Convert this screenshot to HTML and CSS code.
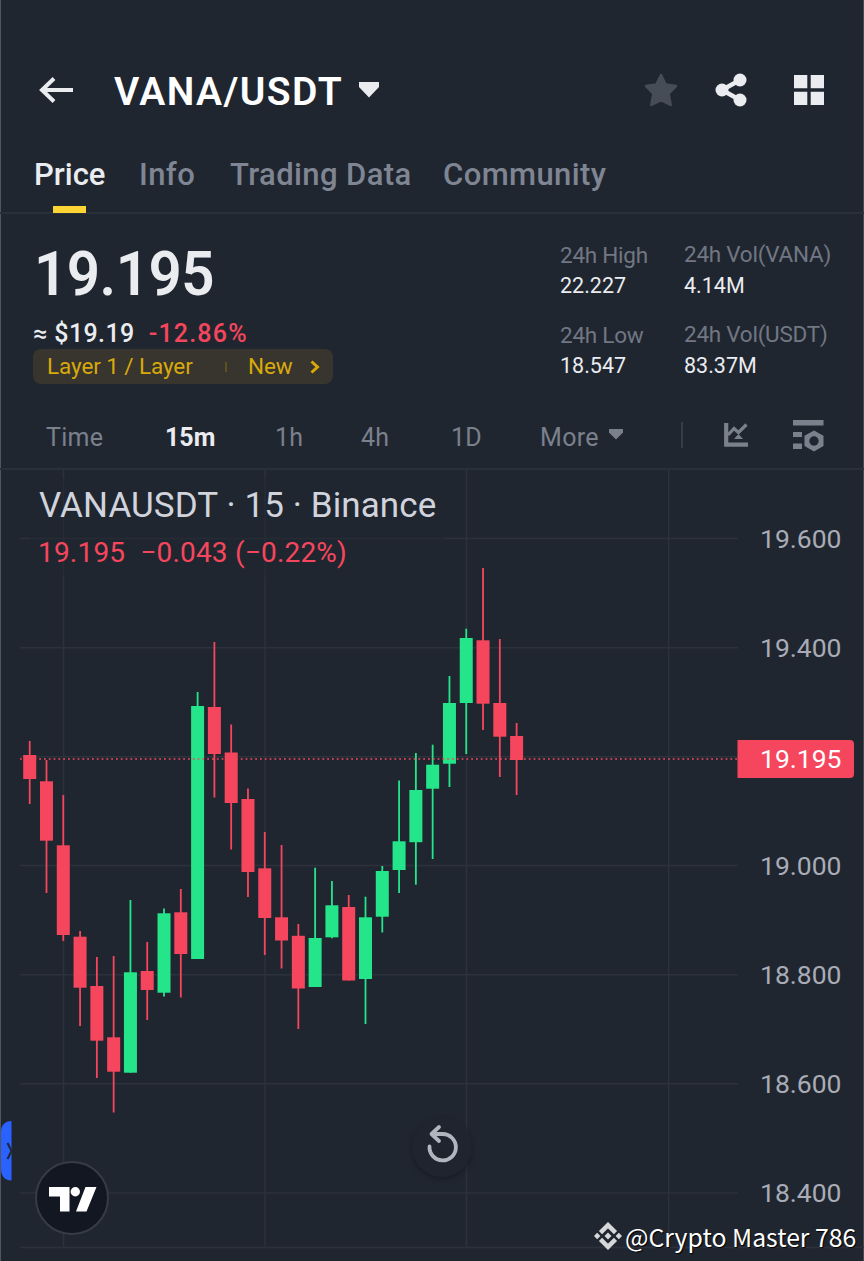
FILE: index.html
```html
<!DOCTYPE html>
<html lang="en">
<head>
  <meta charset="UTF-8" />
  <meta name="viewport" content="width=device-width, initial-scale=1.0" />
  <title>VANA/USDT</title>
  <link rel="stylesheet" href="styles.css">
</head>
<body>
  <header class="topbar">
    <svg class="back" width="36" height="30" viewBox="0 0 36 30"><path d="M35 15H5M16 3.500L4 15L16 26.500" fill="none" stroke="#eaecef" stroke-width="4"/></svg>
    <h1>VANA/USDT</h1>
    <svg class="caret" width="22" height="18" viewBox="0 0 22 18"><path d="M1 1H21V6L11 16.500L1 6Z" fill="#eaecef"/></svg>
    <div class="actions">
      <svg width="34" height="34" viewBox="0 0 34 34"><path d="M17 2L21.700 11.500L32 13L24.600 20.500L26.700 32L17 27.200L7.300 32L9.400 20.500L2 13L12.300 11.500Z" fill="#474d57" stroke="#474d57" stroke-width="2.500" stroke-linejoin="round"/></svg>
      <svg width="34" height="34" viewBox="0 0 34 34"><path d="M26 7L8 17L26 27" fill="none" stroke="#eaecef" stroke-width="4.500"/><circle cx="26" cy="7" r="6.500" fill="#eaecef"/><circle cx="8" cy="17" r="6.500" fill="#eaecef"/><circle cx="26" cy="27" r="6.500" fill="#eaecef"/></svg>
      <svg width="30" height="30" viewBox="0 0 30 30"><path d="M0 0H13.300V13.300H0ZM16.700 0H30V13.300H16.700ZM0 16.700H13.300V30H0ZM16.700 16.700H30V30H16.700Z" fill="#eaecef"/></svg>
    </div>
  </header>

  <nav class="tabs">
    <a class="active">Price</a>
    <a>Info</a>
    <a>Trading Data</a>
    <a>Community</a>
  </nav>

  <section class="summary">
    <div class="quote">
      <div class="price">19.195</div>
      <div class="change"><span>≈ $19.19</span><span class="down">-12.86%</span></div>
      <div class="tags">
        <span class="layer">Layer 1 / Layer</span>
        <i></i>
        <span class="new">New</span>
        <svg width="10" height="14" viewBox="0 0 10 14"><path d="M1.500 1.500L7.500 7L1.500 12.500" fill="none" stroke="#d9a90b" stroke-width="3"/></svg>
      </div>
    </div>
    <dl class="stats high-low">
      <dt>24h High</dt><dd>22.227</dd>
      <dt>24h Low</dt><dd>18.547</dd>
    </dl>
    <dl class="stats volume">
      <dt>24h Vol(VANA)</dt><dd>4.14M</dd>
      <dt>24h Vol(USDT)</dt><dd>83.37M</dd>
    </dl>
  </section>

  <nav class="intervals">
    <a>Time</a>
    <a class="active">15m</a>
    <a>1h</a>
    <a>4h</a>
    <a>1D</a>
    <a class="more">More</a>
    <svg class="more-caret" width="14" height="11" viewBox="0 0 14 11"><path d="M0 0H14V3.500L7 10.500L0 3.500Z" fill="#7b808d"/></svg>
    <i></i>
    <svg class="indicator" width="25" height="26" viewBox="0 0 25 26"><path d="M2.200 1V22.700H24" fill="none" stroke="#7b808d" stroke-width="4.200"/><path d="M4 13L10 6.500L14.500 10.500L22.500 2.500" fill="none" stroke="#7b808d" stroke-width="3.200"/><path d="M14.500 12L19 17H10Z" fill="#7b808d"/></svg>
    <svg class="settings" width="31" height="32" viewBox="0 0 31 32"><path d="M0 0H30.500V5.500H0ZM0 12H9V17H0ZM0 23.500H9V29H0Z" fill="#7b808d"/><path d="M21 10.500L30.500 15.700V26L21 31.500L11.500 26V15.700Z" fill="#7b808d"/><circle cx="21" cy="21" r="4.700" fill="#202630"/></svg>
  </nav>

  <main class="chart">
    <svg class="plot" width="864" height="791" viewBox="0 470 864 791">
      <path class="grid" d="M63.500 470V1247M265 470V1247M466.500 470V1247M668.700 470V1247M20 538.500H738M20 647.800H738M20 756.700H738M20 865.500H738M20 974.800H738M20 1083.700H738M20 1193H738M20 1247.500H864"/>
      <g id="candles"></g>
      <path class="last" d="M20 759H738"/>
      <path d="M737.500 740H850Q854 740 854 744V774Q854 778 850 778H737.500Z" fill="#f6465d"/>
      <g class="axis">
        <text x="760" y="548">19.600</text>
        <text x="760" y="657">19.400</text>
        <text x="760" y="768" class="current">19.195</text>
        <text x="760" y="875">19.000</text>
        <text x="760" y="984">18.800</text>
        <text x="760" y="1093">18.600</text>
        <text x="760" y="1202">18.400</text>
      </g>
    </svg>

    <div class="legend">
      <div class="symbol">VANAUSDT · 15 · Binance</div>
      <div class="values"><span>19.195</span><span>−0.043 (−0.22%)</span></div>
    </div>

    <svg class="drawer" width="12" height="60" viewBox="0 0 12 60"><path d="M11.500 0V59.500C5 59.500 1 55 1 48V11C1 4 5 0 11.500 0Z" fill="#2962ff"/><path d="M7.500 22L11.500 30L7.500 38" fill="none" stroke="#202630" stroke-width="2"/></svg>

    <div class="tv">
      <svg width="48" height="25" viewBox="0 0 48 25"><path d="M0 0H20.500V24.500H11V9.500H0ZM36.500 0H47.500L37.500 24.500H27Z" fill="#fff"/><circle cx="26.300" cy="4.700" r="4.700" fill="#fff"/></svg>
    </div>

    <div class="reset">
      <svg width="34" height="40" viewBox="0 0 34 40"><path d="M3.500 22.500A13.200 13.200 0 1 0 16.700 10H6M13 3L5.500 10L13 17" fill="none" stroke="#b2b5be" stroke-width="3.800" stroke-linecap="round" stroke-linejoin="round"/></svg>
    </div>

    <div class="watermark">
      <svg width="28" height="28" viewBox="0 0 28 28"><path d="M6.500 10.700L14 3.200L21.500 10.700M6.500 17.300L14 24.800L21.500 17.300" fill="none" stroke="#d6d7d9" stroke-width="4.500"/><path d="M14 10.500L17.500 14L14 17.500L10.500 14ZM3.200 10.800L6.400 14L3.200 17.200L0 14ZM24.800 10.800L28 14L24.800 17.200L21.600 14Z" fill="#d6d7d9"/></svg>
      <span>@Crypto Master 786</span>
    </div>
  </main>

  <script>
    // wick top, body top, body bottom, wick bottom, colour
    const candles = [
      [741, 755, 779, 804, 'r'],
      [760, 781.300, 840.700, 893, 'r'],
      [795, 845.300, 935, 941, 'r'],
      [931, 936.700, 987.700, 1026, 'r'],
      [957, 986, 1040.700, 1078, 'r'],
      [956, 1037.300, 1071.700, 1112.500, 'r'],
      [900, 972.300, 1072.700, 1072.700, 'g'],
      [942, 971, 990, 1020, 'r'],
      [908.500, 913.300, 992.700, 996.500, 'g'],
      [889, 912.300, 954, 997.500, 'r'],
      [692, 706, 959, 959, 'g'],
      [642, 707, 754, 797.500, 'r'],
      [724.500, 752.500, 803, 849.500, 'r'],
      [788.500, 799, 872, 897, 'r'],
      [832, 868.300, 918, 955, 'r'],
      [845, 917.300, 940.500, 968.500, 'r'],
      [924, 935.800, 988.500, 1029, 'r'],
      [867.700, 938, 987, 987, 'g'],
      [881, 905.300, 937.300, 938.300, 'g'],
      [895, 907, 980.500, 980.500, 'r'],
      [896.700, 917.300, 979, 1024, 'g'],
      [866, 871, 916.700, 932.500, 'g'],
      [780.500, 841.300, 870, 893, 'g'],
      [753, 790, 842.200, 884.700, 'g'],
      [744.700, 764.700, 788.700, 859, 'g'],
      [676, 703, 763.700, 787, 'g'],
      [628.700, 638, 703, 754, 'g'],
      [568, 640.300, 703.700, 730, 'r'],
      [639, 703, 736.700, 777, 'r'],
      [723, 736, 760, 795, 'r']
    ];

    let out = '';
    candles.forEach(([high, top, bottom, low, dir], i) => {
      const x = 29.700 + i * 16.790;
      out += `<g class="${dir}"><rect x="${x - 0.9}" y="${high}" width="1.8" height="${low - high}"/>` +
        `<rect x="${x - 6.5}" y="${top}" width="13" height="${bottom - top}"/></g>`;
    });
    document.getElementById('candles').innerHTML = out;
  </script>
</body>
</html>
```
FILE: styles.css
```css
* { box-sizing: border-box; }
body { margin: 0; width: 864px; height: 1261px; overflow: hidden; background: #202630; color: #eaecef; font-family: Roboto, "Open Sans", sans-serif; box-shadow: inset 1px 0 #50555f, inset -1px 0 #454a54; }
svg { display: block; flex: none; }

.topbar { display: flex; align-items: center; height: 130px; padding: 49px 40px 0 38px; }
.topbar h1 { width: 229px; margin: 5px 0 0 40px; font-size: 39px; font-weight: 600; line-height: 46px; letter-spacing: 1.4px; color: #fff; white-space: nowrap; }
.caret { margin-left: 15px; }
.actions { display: flex; align-items: center; margin-left: auto; }
.actions svg { margin-left: 36.500px; }
.actions svg:last-child { margin-left: 46px; }

.tabs { display: grid; grid-template-columns: 105px 91px 213px auto; height: 84px; padding: 26px 0 0 34px; border-bottom: 2px solid #2a303a; font-size: 31px; font-weight: 500; line-height: 37px; letter-spacing: 0.4px; white-space: nowrap; }
.tabs a { color: #7f8592; }
.tabs .active { display: flex; flex-direction: column; justify-content: space-between; height: 57px; letter-spacing: 0; color: #eaecef; }
.tabs .active::after { content: ""; width: 33px; height: 7px; margin-left: 19px; background: #fcd535; }

.summary { display: grid; grid-template-columns: 526px 124px auto; height: 190px; padding: 26px 0 0 34px; }
.price { margin-top: 4px; font-size: 61px; font-weight: 600; line-height: 60px; letter-spacing: -0.5px; transform: scaleX(0.955); transform-origin: 0 0; }
.change { display: flex; gap: 14px; margin: 14px 0 0 -1px; font-size: 25px; font-weight: 500; line-height: 31px; letter-spacing: 0.4px; white-space: nowrap; }
.change .down { letter-spacing: 1.2px; color: #f6465d; }
.tags { display: flex; align-items: center; width: 300px; height: 35px; margin: 0 0 0 -1px; padding-left: 14px; border-radius: 8px; background: #37352d; font-size: 22.500px; line-height: 35px; letter-spacing: -0.1px; color: #d9a90b; white-space: nowrap; }
.tags .layer { width: 178px; }
.tags i { width: 2px; height: 10px; background: #5f5021; }
.tags .new { width: 62px; margin-left: 21px; }
.stats { margin: 0; font-size: 22.500px; line-height: 30px; letter-spacing: -0.25px; white-space: nowrap; }
.stats dt { color: #717783; }
.stats dd { margin: 1px 0 19px; font-size: 21.500px; letter-spacing: 0; }
.volume { margin-top: -1px; }
.volume dd { margin: 2px 0 18px; }

.intervals { display: grid; grid-template-columns: 119px 110px 86px 90px 89px 69px 71px 42px 70px auto; align-items: center; height: 66px; padding-left: 46px; border-bottom: 2px solid #2a303a; font-size: 25px; color: #7b808d; white-space: nowrap; }
.intervals a { padding-top: 2px; letter-spacing: 0.3px; }
.intervals .active { font-weight: 700; letter-spacing: 0; color: #eaecef; }
.intervals i { width: 2px; height: 26px; margin: -2px 0 0 1px; background: #373d48; }
.more-caret { margin-top: -3px; }
.indicator { margin: -2px 0 0 2px; }
.settings { margin-left: 1px; }

.chart { position: relative; height: 791px; }
.plot { position: absolute; inset: 0; }
.grid { fill: none; stroke: #2c313b; stroke-width: 1.500; }
.r { fill: #f6465d; }
.g { fill: #25e58b; }
.last { fill: none; stroke: #f6465d; stroke-width: 1.700; stroke-dasharray: 1.800 3; }
.axis { font-size: 26.500px; fill: #a9acb6; }
.axis .current { fill: #fff; }

.legend { position: absolute; left: 30px; top: 8px; padding: 7px 9px; background: rgba(32, 38, 48, 0.5); white-space: nowrap; }
.symbol { font-size: 35px; line-height: 42px; letter-spacing: 0.1px; color: #d1d4dc; }
.values { display: flex; gap: 15px; margin: 9px 0 0 -1px; font-size: 28px; line-height: 34px; letter-spacing: 0.2px; color: #f6465d; }

.drawer { position: absolute; left: 0; top: 651px; }
.tv { position: absolute; left: 35px; top: 691px; display: grid; place-items: center; width: 74px; height: 74px; border: 2px solid #373b46; border-radius: 50%; background: #131722; }
.tv svg { margin: 2px 0 0 1px; }
.reset { position: absolute; left: 412px; top: 647px; display: grid; place-items: center; width: 60px; height: 60px; border-radius: 50%; background: #20242f; box-shadow: 0 2px 4px #171b24; }
.reset svg { margin: -6px 0 0 1px; }
.watermark { position: absolute; left: 594px; top: 748px; display: flex; align-items: center; gap: 3px; font-family: "Noto Sans CJK SC", sans-serif; font-size: 24.800px; line-height: 36px; color: #fff; text-shadow: 1px 1px 1px #000; white-space: nowrap; }
```
